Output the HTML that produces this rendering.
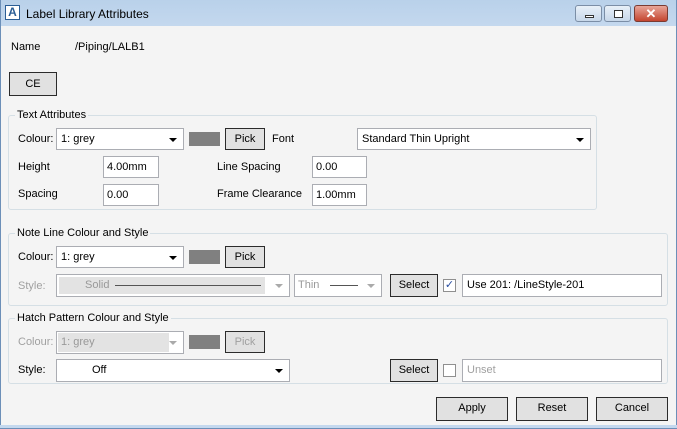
<!DOCTYPE html>
<html><head><style>
*{box-sizing:border-box;margin:0;padding:0}
body{width:677px;height:429px;overflow:hidden;font-family:"Liberation Sans",sans-serif;font-size:11px;color:#000;background:#f4f4f4;position:relative}
.a{position:absolute}
.win{left:0;top:0;width:677px;height:429px;border:1px solid #5a6b80;border-top:none;background:#f4f4f4}
.title{left:0;top:0;width:677px;height:26px;background:linear-gradient(#b9d1ea,#c4d8ee)}
.t{position:absolute;white-space:nowrap;line-height:13px}
.btn{position:absolute;border:1px solid #2b2b2b;background:#e1e1e1;text-align:center;line-height:21px}
.dis{color:#a0a0a0}
.inp{position:absolute;background:#fff;border:1px solid #abadb3;padding-left:3px;line-height:20px}
.combo{position:absolute;background:#fff;border:1px solid #abadb3;padding-left:4px;line-height:20px}
.combo:after{content:"";position:absolute;right:6px;top:9px;border-left:4px solid transparent;border-right:4px solid transparent;border-top:4px solid #000}
.combo.d:after{border-top-color:#aaa}
.grp{position:absolute;border:1px solid #d5dfe5;border-radius:3px}
.gl{position:absolute;background:#f4f4f4;padding:0 2px;line-height:13px}
.sw{position:absolute;width:31px;height:14px;background:#808080}
.cb{position:absolute;width:13px;height:13px;border:1px solid #8f8f8f;background:#fff}
</style></head><body>
<div class="a win"></div>
<div class="a title"></div>
<div class="a" style="left:0;top:0;width:1px;height:429px;background:#6c8fb8"></div>
<div class="a" style="left:676px;top:0;width:1px;height:429px;background:#6c8fb8"></div>
<div class="a" style="left:0;top:425px;width:677px;height:4px;background:#c4d8ee;border-bottom:1px solid #6c8fb8"></div>
<div class="a" style="left:5px;top:5px;width:15px;height:15px;border:1px solid #2a5d95;background:#fff;color:#2a5d95;font-weight:bold;font-size:12px;text-align:center;line-height:13px">A</div>
<div class="t" style="left:26px;top:7px;font-size:12px;line-height:14px">Label Library Attributes</div>
<div class="a" style="left:575px;top:5px;width:27px;height:17px;border:1px solid #7b8ea6;border-radius:3px;background:linear-gradient(#e8f0f8,#c7d7ea)"><div class="a" style="left:9px;top:9px;width:9px;height:3px;border:1px solid #333;background:#fff"></div></div>
<div class="a" style="left:604px;top:5px;width:27px;height:17px;border:1px solid #7b8ea6;border-radius:3px;background:linear-gradient(#e8f0f8,#c7d7ea)"><div class="a" style="left:9px;top:4px;width:9px;height:8px;border:1px solid #333;background:#fff"></div></div>
<div class="a" style="left:634px;top:5px;width:34px;height:17px;border:1px solid #7a3b32;border-radius:3px;background:linear-gradient(#e8a598,#c4452f);color:#fff;font-weight:bold;font-size:13px;text-align:center;line-height:15px">✕</div>

<div class="t" style="left:11px;top:41px">Name</div>
<div class="t" style="left:75px;top:41px">/Piping/LALB1</div>
<div class="btn" style="left:9px;top:72px;width:48px;height:24px;line-height:22px">CE</div>

<div class="grp" style="left:8px;top:115px;width:589px;height:95px"></div>
<div class="gl" style="left:15px;top:109px">Text Attributes</div>
<div class="t" style="left:18px;top:133px">Colour:</div>
<div class="combo" style="left:56px;top:128px;width:128px;height:22px">1: grey</div>
<div class="sw" style="left:189px;top:132px"></div>
<div class="btn" style="left:225px;top:128px;width:40px;height:22px;line-height:20px">Pick</div>
<div class="t" style="left:272px;top:133px">Font</div>
<div class="combo" style="left:357px;top:128px;width:234px;height:22px">Standard Thin Upright</div>
<div class="t" style="left:18px;top:161px">Height</div>
<div class="inp" style="left:103px;top:156px;width:56px;height:22px">4.00mm</div>
<div class="t" style="left:217px;top:161px">Line Spacing</div>
<div class="inp" style="left:312px;top:156px;width:55px;height:22px">0.00</div>
<div class="t" style="left:18px;top:188px">Spacing</div>
<div class="inp" style="left:103px;top:184px;width:56px;height:22px">0.00</div>
<div class="t" style="left:217px;top:188px">Frame Clearance</div>
<div class="inp" style="left:312px;top:184px;width:55px;height:22px">1.00mm</div>

<div class="grp" style="left:8px;top:233px;width:660px;height:73px"></div>
<div class="gl" style="left:15px;top:227px">Note Line Colour and Style</div>
<div class="t" style="left:18px;top:251px">Colour:</div>
<div class="combo" style="left:56px;top:246px;width:128px;height:22px">1: grey</div>
<div class="sw" style="left:189px;top:250px"></div>
<div class="btn" style="left:225px;top:246px;width:40px;height:22px;line-height:20px">Pick</div>
<div class="t dis" style="left:18px;top:280px">Style:</div>
<div class="combo d" style="left:56px;top:274px;width:234px;height:23px;padding:2px"><div style="background:#e3e3e3;height:17px;width:206px;color:#999;line-height:17px;padding-left:26px;position:relative">Solid<div class="a" style="left:56px;top:8px;width:146px;height:1px;background:#555"></div></div></div>
<div class="combo d" style="left:294px;top:274px;width:88px;height:23px;color:#999;padding-left:3px">Thin<div class="a" style="left:35px;top:10px;width:28px;height:1px;background:#555"></div></div>
<div class="btn" style="left:390px;top:274px;width:48px;height:23px;line-height:21px">Select</div>
<div class="cb" style="left:443px;top:279px;color:#2a4ea0;font-size:11px;line-height:11px;text-align:center">✓</div>
<div class="inp" style="left:462px;top:274px;width:200px;height:23px;padding-left:4px;line-height:21px">Use 201: /LineStyle-201</div>

<div class="grp" style="left:8px;top:318px;width:660px;height:66px"></div>
<div class="gl" style="left:15px;top:312px">Hatch Pattern Colour and Style</div>
<div class="t dis" style="left:18px;top:336px">Colour:</div>
<div class="combo d" style="left:56px;top:331px;width:128px;height:23px;padding:1px"><div style="background:#e3e3e3;width:111px;height:19px;color:#999;padding-left:3px;line-height:19px">1: grey</div></div>
<div class="sw" style="left:189px;top:335px"></div>
<div class="btn dis" style="left:225px;top:331px;width:40px;height:22px;line-height:20px">Pick</div>
<div class="t" style="left:18px;top:364px">Style:</div>
<div class="combo" style="left:56px;top:359px;width:234px;height:23px;padding-left:35px">Off</div>
<div class="btn" style="left:390px;top:359px;width:48px;height:23px;line-height:21px">Select</div>
<div class="cb" style="left:443px;top:364px"></div>
<div class="inp dis" style="left:462px;top:359px;width:200px;height:23px;padding-left:4px;line-height:21px">Unset</div>

<div class="btn" style="left:436px;top:397px;width:72px;height:24px">Apply</div>
<div class="btn" style="left:516px;top:397px;width:72px;height:24px">Reset</div>
<div class="btn" style="left:596px;top:397px;width:72px;height:24px">Cancel</div>
</body></html>
